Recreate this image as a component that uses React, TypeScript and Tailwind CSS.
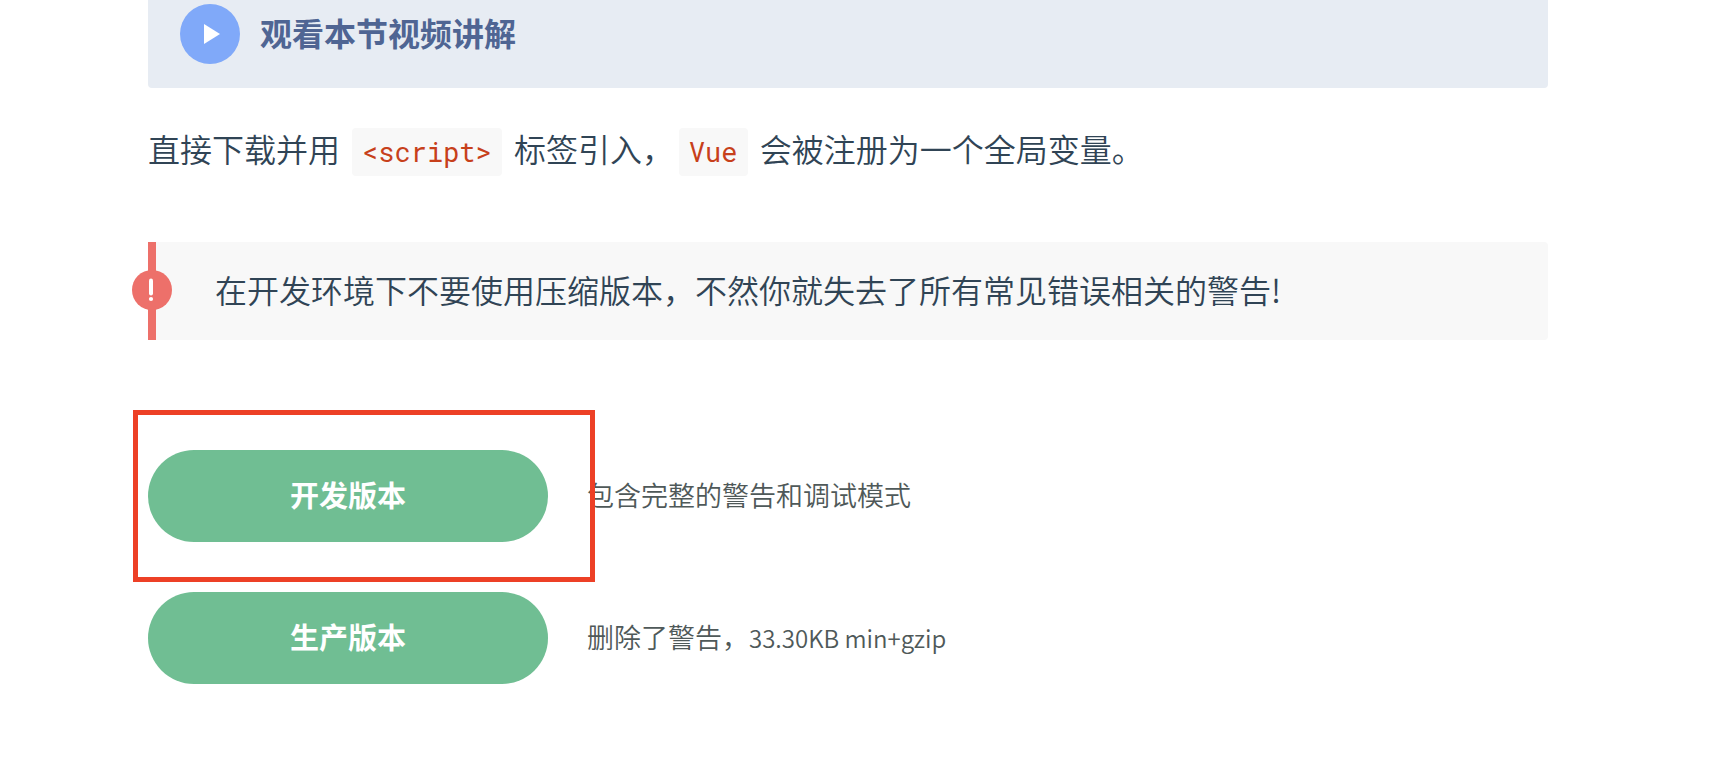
import type { ReactNode } from 'react'

interface DownloadProps {
  label: string
  note: string
  size?: string
}

const downloads: DownloadProps[] = [
  { label: '开发版本', note: '包含完整的警告和调试模式' },
  { label: '生产版本', note: '删除了警告，', size: '33.30KB min+gzip' },
]

function Code({ children }: { children: ReactNode }) {
  return (
    <code className="mx-[5px] inline-block rounded bg-[#f8f8f8] px-[10px] font-['Roboto_Mono','Liberation_Mono',monospace] text-[27px] leading-[48px] font-normal text-[#c7401b]">
      {children}
    </code>
  )
}

function Download({ label, note, size }: DownloadProps) {
  return (
    <div className="flex items-center gap-[39px]">
      <a
        href="#"
        className="w-[400px] flex-none rounded-full bg-[#70be93] pb-1 text-center text-[29px] leading-[88px] font-bold text-white"
      >
        {label}
      </a>
      <span className="pb-0.5 text-[27px] leading-9 text-[#4f5959]">
        {note}
        {size && <span className="text-2xl leading-9">{size}</span>}
      </span>
    </div>
  )
}

export default function App() {
  return (
    <main
      lang="zh-CN"
      className="min-h-screen bg-white pr-[184px] pb-24 pl-[148px] font-['Noto_Sans_CJK_SC',sans-serif] text-[32px] font-[350] text-[#304455]"
    >
      {/* Video banner */}
      <a href="#" className="flex items-center gap-5 rounded-b bg-[#e7ecf3] px-8 pt-1 pb-6">
        <svg viewBox="0 0 60 60" className="size-[60px] flex-none" aria-hidden="true">
          <circle cx="30" cy="30" r="30" fill="#80a9f9" />
          <path d="M24 20 L40 30 L24 40 Z" fill="#fff" />
        </svg>
        <span className="pb-1 leading-[56px] font-bold text-[#4f6593]">观看本节视频讲解</span>
      </a>

      <p className="mt-9 leading-[48px]">
        直接下载并用 <Code>&lt;script&gt;</Code> 标签引入，<Code>Vue</Code> 会被注册为一个全局变量。
      </p>

      {/* Warning */}
      <div className="relative mt-[66px] rounded-r border-l-8 border-[#ed706a] bg-[#f8f8f8] pt-6 pb-7 pl-[59px]">
        <svg
          viewBox="0 0 40 40"
          className="absolute top-7 -left-6 size-10"
          aria-hidden="true"
        >
          <circle cx="20" cy="20" r="20" fill="#ed706a" />
          <path d="M19 10.5 V23.5" stroke="#fff" strokeWidth="4" strokeLinecap="round" />
          <circle cx="19" cy="29" r="2.1" fill="#fff" />
        </svg>
        <p className="leading-[46px]">在开发环境下不要使用压缩版本，不然你就失去了所有常见错误相关的警告!</p>
      </div>

      <div className="relative mt-[110px] flex flex-col gap-[50px]">
        {downloads.map((item) => (
          <Download key={item.label} {...item} />
        ))}
        {/* Highlight around the first download */}
        <div className="pointer-events-none absolute -top-10 -left-[15px] h-[172px] w-[462px] border-5 border-[#ed4026]" />
      </div>
    </main>
  )
}
